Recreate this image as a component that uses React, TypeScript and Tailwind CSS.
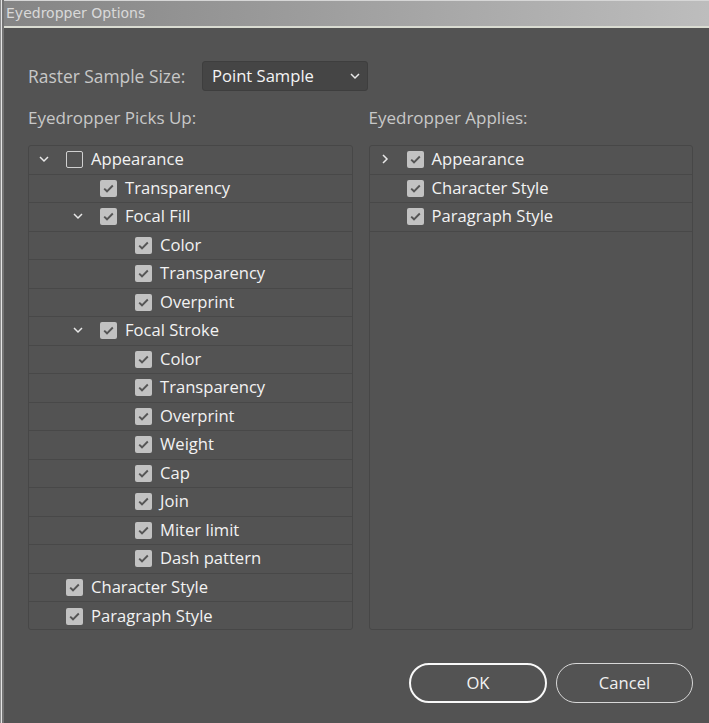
import React from "react";

type Row = { label: string; level: number; chevron?: "down" | "right"; checked: boolean };

const picks: Row[] = [
  { label: "Appearance", level: 0, chevron: "down", checked: false },
  { label: "Transparency", level: 1, checked: true },
  { label: "Focal Fill", level: 1, chevron: "down", checked: true },
  { label: "Color", level: 2, checked: true },
  { label: "Transparency", level: 2, checked: true },
  { label: "Overprint", level: 2, checked: true },
  { label: "Focal Stroke", level: 1, chevron: "down", checked: true },
  { label: "Color", level: 2, checked: true },
  { label: "Transparency", level: 2, checked: true },
  { label: "Overprint", level: 2, checked: true },
  { label: "Weight", level: 2, checked: true },
  { label: "Cap", level: 2, checked: true },
  { label: "Join", level: 2, checked: true },
  { label: "Miter limit", level: 2, checked: true },
  { label: "Dash pattern", level: 2, checked: true },
  { label: "Character Style", level: 0, checked: true },
  { label: "Paragraph Style", level: 0, checked: true },
];

const applies: Row[] = [
  { label: "Appearance", level: 0, chevron: "right", checked: true },
  { label: "Character Style", level: 0, checked: true },
  { label: "Paragraph Style", level: 0, checked: true },
];

const indent = ["pl-[37px]", "pl-[71px]", "pl-[106px]"];

function Chevron({ dir }: { dir: "down" | "right" }) {
  return (
    <svg width="12" height="12" viewBox="0 0 12 12" className="absolute left-[-28px] top-[2px]">
      {dir === "down" ? (
        <path d="M2 4 L6 8 L10 4" fill="none" stroke="#e8e8e8" strokeWidth="1.5" />
      ) : (
        <path d="M4 2 L8 6 L4 10" fill="none" stroke="#e8e8e8" strokeWidth="1.5" />
      )}
    </svg>
  );
}

function Box({ checked }: { checked: boolean }) {
  if (!checked) {
    return <div className="w-[17px] h-[17px] rounded-[2px] border-[1.5px] border-[#d0d0d0] shrink-0" />;
  }
  return (
    <div className="w-[17px] h-[17px] rounded-[2px] bg-[#c2c2c2] shrink-0 flex items-center justify-center">
      <svg width="11" height="9" viewBox="0 0 11 9">
        <path d="M1.2 4.6 L4 7.3 L9.8 1.5" fill="none" stroke="#555555" strokeWidth="1.9" />
      </svg>
    </div>
  );
}

function TreeRow({ row, last }: { row: Row; last: boolean }) {
  return (
    <div
      className={`h-[28.5px] flex items-center ${indent[row.level]} ${last ? "" : "border-b border-[#484848]"}`}
    >
      <div className="relative flex items-center gap-[8px]">
        {row.chevron && <Chevron dir={row.chevron} />}
        <Box checked={row.checked} />
        <span className="text-[16.6px] text-[#f2f2f2] leading-none">{row.label}</span>
      </div>
    </div>
  );
}

function Tree({ rows }: { rows: Row[] }) {
  return (
    <div className="h-[485px] rounded-[3px] border border-[#474747]">
      {rows.map((r, i) => (
        <TreeRow key={i} row={r} last={i === rows.length - 1 && rows.length === 17} />
      ))}
    </div>
  );
}

export default function App() {
  return (
    <div
      className="w-[709px] h-[723px] bg-[#535353] flex overflow-hidden"
      style={{ fontFamily: '"Open Sans", "Noto Sans", sans-serif' }}
    >
      <div className="w-px bg-[#8c8c8c]" />
      <div className="w-px bg-[#e4e4e4]" />
      <div className="w-[2px] bg-[#747474]" />
      <div className="flex-1 flex flex-col">
        <div className="h-[28px] flex flex-col">
          <div className="h-px bg-[#d6d6d6]" />
          <div className="flex-1 flex items-center pl-[2px] bg-gradient-to-r from-[#858585] to-[#bdbdbd]">
            <span
              className="text-[14px] text-[#d9d9d9]"
              style={{ fontFamily: 'Tahoma, "DejaVu Sans", sans-serif' }}
            >
              Eyedropper Options
            </span>
          </div>
          <div className="h-[2px] bg-[#dadcd2]" />
        </div>

        <div className="flex-1 pl-[24px] pr-[16px] flex flex-col">
          <div className="flex items-center mt-[33px] h-[30px]">
            <span className="text-[17.4px] text-[#c8c8c8] w-[174px]">Raster Sample Size:</span>
            <div className="w-[166px] h-[30px] rounded-[3px] bg-[#454545] border border-[#3e3e3e] flex items-center justify-between pl-[9px] pr-[6px]">
              <span className="text-[16.6px] text-[#f4f4f4]">Point Sample</span>
              <svg width="12" height="12" viewBox="0 0 12 12">
                <path d="M2 4 L6 8 L10 4" fill="none" stroke="#e8e8e8" strokeWidth="1.5" />
              </svg>
            </div>
          </div>

          <div className="grid grid-cols-2 gap-[16px] mt-[15px]">
            <div className="flex flex-col">
              <span className="text-[17px] text-[#c8c8c8] h-[24px] leading-[24px]">Eyedropper Picks Up:</span>
              <div className="mt-[15px]">
                <Tree rows={picks} />
              </div>
            </div>
            <div className="flex flex-col">
              <span className="text-[17px] text-[#c8c8c8] h-[24px] leading-[24px]">Eyedropper Applies:</span>
              <div className="mt-[15px]">
                <Tree rows={applies} />
              </div>
            </div>
          </div>

          <div className="flex justify-end gap-[9px] mt-[33px]">
            <button className="w-[138px] h-[40px] rounded-full border-2 border-[#f8f8f8] text-[16.6px] text-[#f4f4f4]">
              OK
            </button>
            <button className="w-[137px] h-[40px] rounded-full border-[1.5px] border-[#d8d8d8] text-[16.6px] text-[#f0f0f0]">
              Cancel
            </button>
          </div>
        </div>
      </div>
    </div>
  );
}
